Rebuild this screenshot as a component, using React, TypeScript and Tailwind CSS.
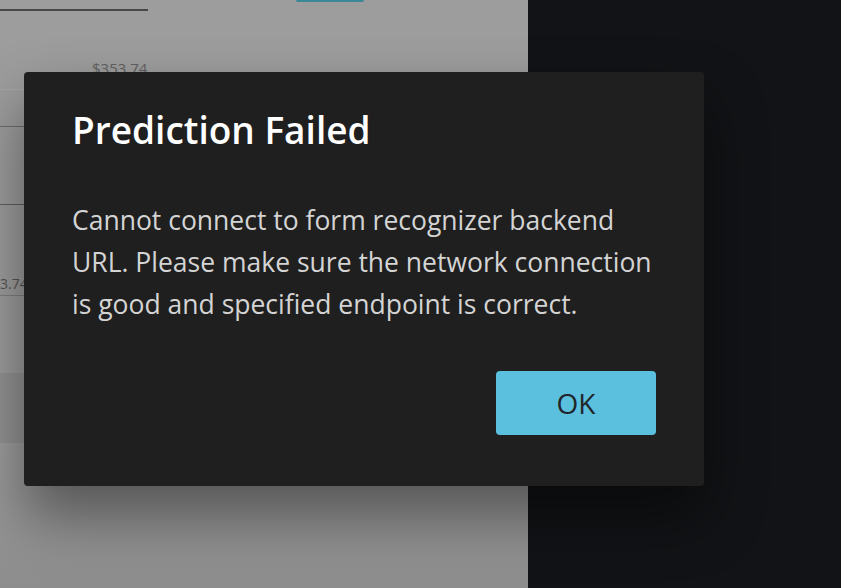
import React from "react";

const font = { fontFamily: '"Open Sans", "Noto Sans", sans-serif' };

const DocumentBackdrop: React.FC = () => (
  <div className="relative w-[528px] h-full overflow-hidden bg-[#9d9d9d]">
    <div className="h-[9px]" />
    <div className="w-[148px] h-[2px] bg-[#474747]" />
    <div className="absolute left-[296px] -top-[2px] w-[68px] h-[4px] rounded-full bg-[#3a8796] blur-[0.5px]" />
    <div className="pl-[92px] pt-[50px] text-[15px] leading-none text-[#616161]" style={font}>
      $353.74
    </div>
    <div className="mt-[13px] w-[24px] h-px bg-[#a6a6a6]" />
    <div className="mt-[36px] w-[24px] h-px bg-[#6d6d6d]" />
    <div className="mt-[77px] w-[24px] h-px bg-[#5f5f5f]" />
    <div className="mt-[72px] text-[14px] leading-none text-[#555]" style={font}>
      3.74
    </div>
    <div className="mt-[4px] w-[24px] h-px bg-[#7f7f7f]" />
    <div className="mt-[77px] w-[24px] h-[70px] bg-[#939393]" />
    <div className="absolute inset-x-0 bottom-0 h-[140px] bg-gradient-to-b from-transparent to-[#8d8d8d]" />
  </div>
);

const App: React.FC = () => {
  return (
    <div className="relative w-[841px] h-[588px] flex overflow-hidden" style={font}>
      <DocumentBackdrop />
      <div className="flex-1 bg-[#121316]" />

      <div className="absolute left-[24px] top-[72px] w-[680px] h-[414px] rounded bg-[#1f1f1f] shadow-[0_30px_60px_rgba(0,0,0,0.45)] px-[48px] pt-[28px] flex flex-col">
        <h2 className="text-[37px] leading-[60px] font-semibold text-white">
          Prediction Failed
        </h2>
        <p className="mt-[39px] w-[584px] text-[26.5px] leading-[42px] text-[#d4d4d4]">
          Cannot connect to form recognizer backend URL. Please make sure the network connection is good and specified endpoint is correct.
        </p>
        <div className="mt-auto mb-[51px] flex justify-end">
          <button
            type="button"
            className="w-[160px] h-[64px] rounded bg-[#5bc0de] text-[28px] text-[#212529]"
          >
            OK
          </button>
        </div>
      </div>
    </div>
  );
};

export default App;
